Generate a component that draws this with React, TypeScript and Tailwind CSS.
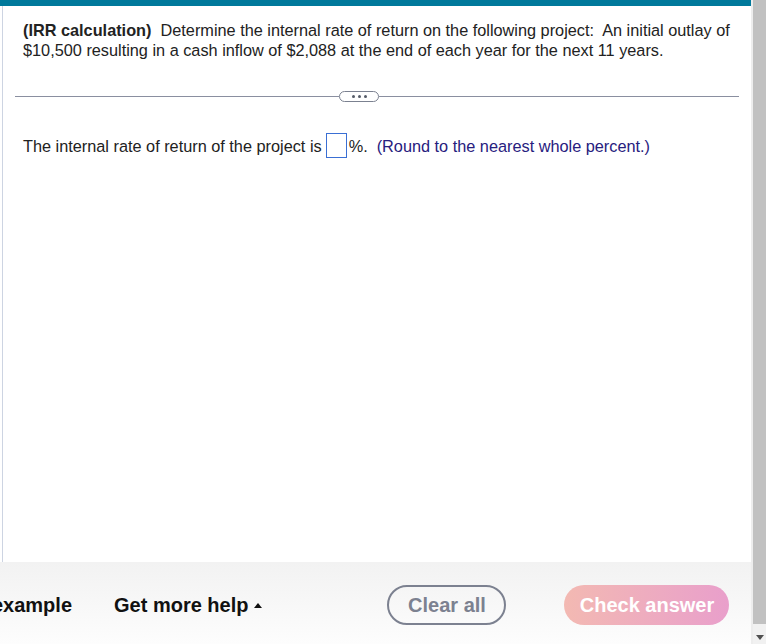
import { ReactNode } from 'react'

function PillButton({ children, primary }: { children: ReactNode; primary?: boolean }) {
  if (primary) {
    return (
      <button className="h-[40px] w-[165px] rounded-full bg-gradient-to-r from-[#f3b9b2] to-[#e99fcb] text-[20px] font-bold text-white">
        {children}
      </button>
    )
  }
  return (
    <button className="h-[40px] w-[119px] rounded-full border-2 border-[#7c8190] text-[20px] font-bold text-[#7c8190]">
      {children}
    </button>
  )
}

export default function App() {
  return (
    <div className="flex h-[644px] w-[766px] overflow-hidden bg-white font-['Liberation_Sans',Arial,sans-serif] text-[#222]">
      <div className="flex w-[751px] flex-col">
        <div className="h-[6px] bg-[#00799b]" />
        <div className="ml-[2px] flex-1 border-l border-[#cdd4e2] pt-[14px]">
          <p className="whitespace-pre-wrap pl-[20px] pr-[16px] text-[16.3px] leading-[20px]">
            <b>(IRR calculation)</b>
            {'  Determine the internal rate of return on the following project:  An initial outlay of '}
            $10,500 resulting in a cash inflow of $2,088 at the end of each year for the next 11 years.
          </p>

          <div className="mt-[31px] flex items-center px-[12px]">
            <div className="h-px w-[324px] bg-[#8a8fa0]" />
            <div className="flex h-[11px] w-[40px] items-center justify-center gap-[3px] rounded-full border border-[#7b8190] bg-white">
              <span className="h-[3px] w-[3px] rounded-full bg-[#555b68]" />
              <span className="h-[3px] w-[3px] rounded-full bg-[#555b68]" />
              <span className="h-[3px] w-[3px] rounded-full bg-[#555b68]" />
            </div>
            <div className="h-px flex-1 bg-[#8a8fa0]" />
          </div>

          <div className="mt-[31px] flex items-center pl-[20px] text-[16.3px] leading-[20px]">
            <span>The internal rate of return of the project is</span>
            <span className="ml-[4px] mr-[2px] inline-block h-[25px] w-[21px] border border-[#3a6fd4]" />
            <span>%.</span>
            <span className="ml-[9px] text-[#27207e]">(Round to the nearest whole percent.)</span>
          </div>
        </div>

        <div className="flex h-[82px] items-center bg-gradient-to-b from-[#f2f2f2] to-[#fdfdfd] pt-[4px]">
          <div className="flex w-[72px] justify-end overflow-hidden">
            <span className="whitespace-nowrap text-[20px] font-bold text-[#111]">View an example</span>
          </div>
          <div className="ml-[42px] flex items-center text-[20px] font-bold text-[#111]">
            <span>Get more help</span>
            <svg className="ml-[6px]" width="8" height="5" viewBox="0 0 8 5">
              <path d="M0 5 L4 0 L8 5 Z" fill="#111" />
            </svg>
          </div>
          <div className="ml-[125px]">
            <PillButton>Clear all</PillButton>
          </div>
          <div className="ml-[58px]">
            <PillButton primary>Check answer</PillButton>
          </div>
        </div>
      </div>

      <div className="w-[2px] bg-[#ededed]" />
      <div className="flex w-[13px] flex-col">
        <div className="flex-1 bg-[#c1c1c1]" />
        <div className="flex h-[20px] items-center justify-center bg-[#f1f1f1] pt-[6px]">
          <svg width="8" height="5" viewBox="0 0 8 5">
            <path d="M0 0 L8 0 L4 5 Z" fill="#505050" />
          </svg>
        </div>
      </div>
    </div>
  )
}
